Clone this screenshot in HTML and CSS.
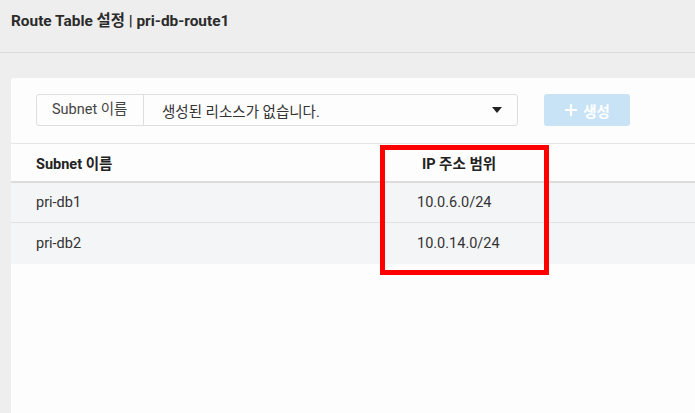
FILE: index.html
```html
<!DOCTYPE html>
<html lang="ko">

<head>
	<meta charset="UTF-8">
	<title>Route Table 설정</title>
	<link rel="stylesheet" href="styles.css">
</head>

<body>
	<div class="page-head">
		<h1 class="page-title">Route Table 설정 | pri-db-route1</h1>
	</div>
	<div class="page-body">
		<div class="card">
			<div class="toolbar">
				<div class="select-group">
					<span class="select-label">Subnet 이름</span>
					<div class="select-box">
						<span>생성된 리소스가 없습니다.</span>
						<span class="caret"></span>
					</div>
				</div>
				<button class="btn-create" disabled>
					<svg width="14" height="14" viewBox="0 0 14 14">
						<path d="M7 1v12M1 7h12" stroke="#fff" stroke-width="2.2" fill="none" />
					</svg>
					생성
				</button>
			</div>
			<div class="table">
				<div class="row head">
					<div class="cell">Subnet 이름</div>
					<div class="cell ip">IP 주소 범위</div>
					<div class="cell"></div>
				</div>
				<div class="row">
					<div class="cell">pri-db1</div>
					<div class="cell ip">10.0.6.0/24</div>
					<div class="cell"></div>
				</div>
				<div class="row last">
					<div class="cell">pri-db2</div>
					<div class="cell ip">10.0.14.0/24</div>
					<div class="cell"></div>
				</div>
				<!-- 강조 표시 -->
				<div class="highlight"></div>
			</div>
		</div>
	</div>
</body>

</html>
```

FILE: styles.css
```css
* {
	margin: 0;
	padding: 0;
	box-sizing: border-box;
}

body {
	background: #eeeeee;
	font-family: Roboto, "Noto Sans CJK KR", sans-serif;
	color: #333;
	height: 413px;
	overflow: hidden;
}

.page-head {
	height: 53px;
	padding: 11px 11px 0;
	border-bottom: 1px solid #dcdcdc;
}

.page-title {
	font-size: 15.4px;
	line-height: 20px;
	font-weight: 700;
	color: #2b2b2b;
}

.page-body {
	padding: 25px 0 0 11px;
}

.card {
	background: #fdfdfd;
	border-radius: 2px 0 0 0;
	height: 335px;
}

.toolbar {
	display: flex;
	align-items: center;
	gap: 26px;
	padding: 16px 0 17px 25px;
}

.select-group {
	display: flex;
	height: 32px;
	border: 1px solid #dedede;
	border-radius: 3px;
	font-size: 14.5px;
}

.select-label {
	width: 107px;
	padding-left: 15px;
	line-height: 30px;
	color: #444;
	border-right: 1px solid #dedede;
}

.select-box {
	width: 373px;
	display: flex;
	align-items: center;
	justify-content: space-between;
	padding: 0 15px 0 18px;
	color: #333;
}

.caret {
	width: 0;
	height: 0;
	border-left: 5px solid transparent;
	border-right: 5px solid transparent;
	border-top: 6px solid #222;
}

.btn-create {
	width: 86px;
	height: 32px;
	border: none;
	border-radius: 3px;
	background: #c8e3f6;
	color: #fff;
	font-family: inherit;
	font-size: 14.5px;
	font-weight: 700;
	display: flex;
	align-items: center;
	justify-content: center;
	gap: 5px;
}

.table {
	position: relative;
	border-top: 1px solid #e6e6e6;
	font-size: 14.5px;
}

.row {
	display: grid;
	grid-template-columns: 389px 118px 1fr;
	height: 40px;
	align-items: center;
	background: #f4f5f7;
	border-bottom: 1px solid #e2e2e2;
}

.row.last {
	border-bottom: none;
	height: 41px;
}

.row.head {
	height: 39px;
	background: #fdfdfd;
	font-weight: 700;
	color: #222;
	border-bottom: 2px solid #dcdcdc;
}

.cell {
	padding-left: 25px;
}

.cell.ip {
	padding-left: 17px;
}

.row.head .cell.ip {
	padding-left: 0;
	text-align: center;
}

.highlight {
	position: absolute;
	left: 369px;
	top: 1px;
	width: 169px;
	height: 130px;
	border: 5px solid #ff0000;
}
```
